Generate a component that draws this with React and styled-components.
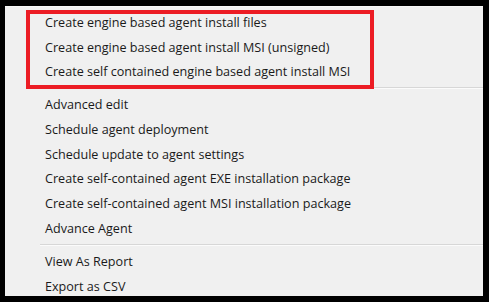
import React from 'react'
import styled, { createGlobalStyle } from 'styled-components'

const GlobalStyle = createGlobalStyle`
  html, body {
    margin: 0;
    padding: 0;
    background: #000;
  }
  body {
    width: 489px;
    height: 302px;
    overflow: hidden;
  }
`

const StyledFrame = styled.div`
  box-sizing: border-box;
  width: 489px;
  height: 302px;
  padding: 6px 6px 6px 5px;
  background: #000;
`
const StyledMenu = styled.div`
  box-sizing: border-box;
  height: 100%;
  padding-top: 3px;
  background: #f0f0f0;
  border-top: 1px solid #f7f7f7;
  font-family: 'Open Sans', 'Noto Sans', sans-serif;
  font-size: 12.6px;
  color: #1a1a1a;
`
const StyledGroup = styled.div`
  position: relative;
  display: flex;
  flex-direction: column;
`
const StyledItem = styled.div`
  display: flex;
  align-items: center;
  height: 24.7px;
  padding-left: 40px;
  white-space: nowrap;
`
const StyledSeparator = styled.div`
  height: 8.5px;
  display: flex;
  flex-direction: column;
  padding-left: 35px;

  &::before {
    content: '';
    display: block;
    margin-top: 3px;
    height: 1px;
    background: #d7d7d7;
  }
  &::after {
    content: '';
    display: block;
    height: 1px;
    background: #fbfbfb;
  }
`
const StyledHighlight = styled.div`
  position: absolute;
  left: 21px;
  top: 0;
  width: 348px;
  height: 79px;
  box-sizing: border-box;
  border: 4px solid #ec1c24;
  pointer-events: none;
`

const groups = [
  {
    highlight: true,
    items: [
      'Create engine based agent install files',
      'Create engine based agent install MSI (unsigned)',
      'Create self contained engine based agent install MSI',
    ],
  },
  {
    items: [
      'Advanced edit',
      'Schedule agent deployment',
      'Schedule update to agent settings',
      'Create self-contained agent EXE installation package',
      'Create self-contained agent MSI installation package',
      'Advance Agent',
    ],
  },
  {
    items: ['View As Report', 'Export as CSV'],
  },
]

const App = () => (
  <>
    <GlobalStyle />
    <StyledFrame>
      <StyledMenu>
        {groups.map((group, i) => (
          <React.Fragment key={i}>
            {i > 0 && <StyledSeparator />}
            <StyledGroup>
              {group.items.map((label) => (
                <StyledItem key={label}>{label}</StyledItem>
              ))}
              {group.highlight && <StyledHighlight />}
            </StyledGroup>
          </React.Fragment>
        ))}
      </StyledMenu>
    </StyledFrame>
  </>
)

export default App
